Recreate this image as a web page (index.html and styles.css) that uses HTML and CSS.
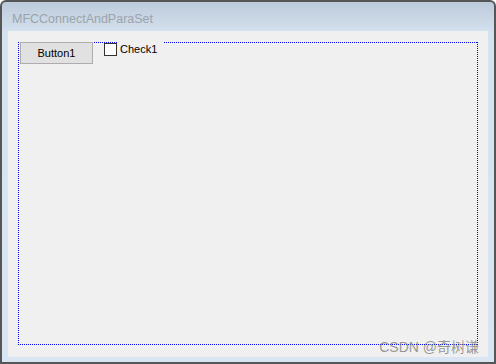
FILE: index.html
```html
<!DOCTYPE html>
<html lang="en">
<head>
  <meta charset="UTF-8">
  <meta name="viewport" content="width=device-width, initial-scale=1.0">
  <title>MFCConnectAndParaSet</title>
  <link rel="stylesheet" href="styles.css">
</head>
<body>

  <div class="window">
    <div class="title">MFCConnectAndParaSet</div>

    <div class="client">
      <div class="group">
        <div class="toolbar">
          <button class="btn">Button1</button>
          <label class="check">
            <span class="box"></span>
            <span class="check-text">Check1</span>
          </label>
        </div>
      </div>
    </div>

    <!-- watermark -->
    <div class="watermark">CSDN @奇树谦</div>
  </div>

</body>
</html>
```

FILE: styles.css
```css
body {
  margin: 0;
  padding: 0;
  font-family: "Liberation Sans", Arial, sans-serif;
}

.window {
  position: relative;
  box-sizing: border-box;
  width: 496px;
  height: 364px;
  border: 2px solid #565656;
  border-radius: 6px 6px 0 0;
  background: linear-gradient(#bccbda, #d5e2f0 32px, #d9e5f2);
  overflow: hidden;
}

.title {
  box-sizing: border-box;
  height: 29px;
  padding: 10px 0 0 10px;
  font-size: 12.5px;
  line-height: 15px;
  color: #9ca3ab;
}

.client {
  box-sizing: border-box;
  height: 326px;
  margin: 0 6px;
  padding: 11px 0 0 10px;
  background: #f0f0f0;
}

/* dotted focus rectangle, drawn pixel by pixel */
.group {
  box-sizing: border-box;
  width: 460px;
  height: 303px;
  padding: 1px;
  background:
    repeating-linear-gradient(90deg, #0000ff 0 1px, transparent 1px 2px) top left / 100% 1px no-repeat,
    repeating-linear-gradient(90deg, #0000ff 0 1px, transparent 1px 2px) bottom left / 100% 1px no-repeat,
    repeating-linear-gradient(180deg, #0000ff 0 1px, transparent 1px 2px) top left / 1px 100% no-repeat,
    repeating-linear-gradient(180deg, #0000ff 0 1px, transparent 1px 2px) top right / 1px 100% no-repeat;
}

.toolbar {
  display: flex;
  align-items: flex-start;
  margin: -1px 0 0 1px;
}

.btn {
  box-sizing: border-box;
  width: 73px;
  height: 22px;
  padding: 0;
  font-family: "Liberation Sans", Arial, sans-serif;
  font-size: 11px;
  color: #000;
  background: #e1e1e1;
  border: 1px solid #adadad;
  border-radius: 0;
}

.check {
  display: flex;
  align-items: center;
  margin-left: 11px;
  font-size: 11px;
  color: #000;
}

.box {
  box-sizing: border-box;
  width: 13px;
  height: 13px;
  margin-top: 1px;
  border: 1px solid #333;
  background: #fff;
}

.check-text {
  padding: 0 7px 0 3px;
  line-height: 14px;
  background: #f0f0f0;
}

.watermark {
  position: absolute;
  right: 15px;
  bottom: 6px;
  font-size: 14px;
  line-height: 18px;
  color: rgba(120, 120, 120, 0.75);
  font-family: "Liberation Sans", "Noto Sans CJK SC", sans-serif;
}
```
